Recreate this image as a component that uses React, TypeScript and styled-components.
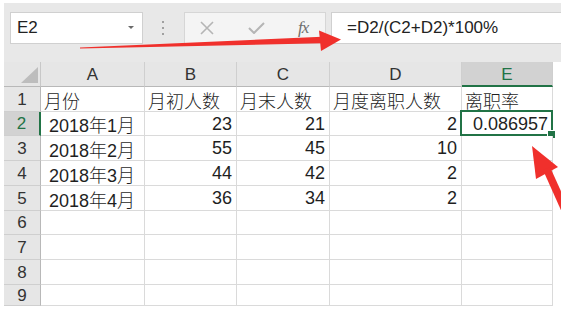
import React from "react";
import styled, { createGlobalStyle, css } from "styled-components";

const GlobalStyle = createGlobalStyle`
  html, body { margin: 0; padding: 0; background: #ffffff; }
  body { width: 561px; height: 313px; overflow: hidden; }
  * { box-sizing: border-box; }
`;

const GREEN = "#217346";
const FONT = `"Liberation Sans", "Noto Sans CJK SC", sans-serif`;

const Page = styled.div`
  position: relative;
  width: 561px;
  height: 313px;
  padding: 3px 0 0 4px;
  font-family: ${FONT};
`;

const Toolbar = styled.div`
  display: flex;
  align-items: center;
  height: 59px;
  padding: 0 0 10px 6px;
  background: #e8e8e8;
`;

const NameBox = styled.div`
  display: flex;
  align-items: center;
  justify-content: space-between;
  width: 133px;
  height: 32px;
  padding: 0 8px 0 6px;
  background: #ffffff;
  border: 1px solid #d0d0d0;
  font-size: 17px;
  color: #222;
`;

const DropArrow = styled.span`
  width: 0;
  height: 0;
  border-left: 3px solid transparent;
  border-right: 3px solid transparent;
  border-top: 3px solid #6a6a6a;
`;

const Grip = styled.div`
  display: flex;
  flex-direction: column;
  gap: 4px;
  margin: 0 20px 0 19px;
  span {
    width: 2px;
    height: 2px;
    background: #a0a0a0;
  }
`;

const FuncButtons = styled.div`
  display: flex;
  align-items: center;
  width: 142px;
  height: 32px;
  padding: 0 0 0 15px;
  background: #f4f4f4;
  border: 1px solid #d6d6d6;
`;

const FuncIcon = styled.span<{ $w: number }>`
  display: flex;
  align-items: center;
  width: ${(p) => p.$w}px;
`;

const Fx = styled.span`
  font-family: "Liberation Serif", serif;
  font-style: italic;
  font-size: 17px;
  color: #6e6e6e;
  letter-spacing: -1px;
`;

const FormulaInput = styled.div`
  flex: 1;
  height: 32px;
  margin-left: 5px;
  display: flex;
  align-items: center;
  padding-left: 15px;
  background: #ffffff;
  border: 1px solid #d0d0d0;
  border-right: none;
  font-size: 17px;
  color: #222;
`;

const Sheet = styled.div`
  display: grid;
  grid-template-columns: 37px 104px 92px 93px 132px 91px;
  grid-template-rows: 25px 25px 24px 25px 25px 25px 24px 25px 25px 21px;
  width: 549px;
`;

const Corner = styled.div`
  position: relative;
  background: #e6e6e6;
  border-right: 1px solid #c8c8c8;
  border-bottom: 1px solid #b8b8b8;
  &::after {
    content: "";
    position: absolute;
    right: 2px;
    bottom: 3px;
    width: 0;
    height: 0;
    border-left: 17px solid transparent;
    border-bottom: 16px solid #bdbdbd;
  }
`;

const ColHeader = styled.div<{ $sel?: boolean }>`
  display: flex;
  align-items: center;
  justify-content: center;
  padding-top: 2px;
  background: #e6e6e6;
  border-right: 1px solid #cfcfcf;
  border-bottom: 1px solid #b8b8b8;
  font-size: 17px;
  color: #333;
  ${(p) =>
    p.$sel &&
    css`
      background: #d2d2d2;
      color: ${GREEN};
      border-bottom: 2px solid ${GREEN};
    `}
`;

const RowHeader = styled.div<{ $sel?: boolean }>`
  display: flex;
  align-items: center;
  justify-content: center;
  padding-top: 1px;
  background: #e6e6e6;
  border-right: 1px solid #b8b8b8;
  border-bottom: 1px solid #cfcfcf;
  font-size: 17px;
  color: #333;
  ${(p) =>
    p.$sel &&
    css`
      background: #d2d2d2;
      color: ${GREEN};
      border-right: 2px solid ${GREEN};
    `}
`;

const Cell = styled.div<{ $align?: "left" | "right" | "center"; $sel?: boolean }>`
  position: relative;
  display: flex;
  align-items: center;
  justify-content: ${(p) =>
    p.$align === "right" ? "flex-end" : p.$align === "center" ? "center" : "flex-start"};
  padding: 1px 4px 0 3px;
  background: #ffffff;
  border-right: 1px solid #dadada;
  border-bottom: 1px solid #dadada;
  font-size: 18px;
  font-weight: 300;
  color: #1f1f1f;
  white-space: nowrap;
  ${(p) =>
    p.$sel &&
    css`
      &::before {
        content: "";
        position: absolute;
        left: -2px;
        top: -2px;
        right: -1px;
        bottom: -1px;
        border: 2px solid ${GREEN};
        pointer-events: none;
      }
      &::after {
        content: "";
        position: absolute;
        right: -4px;
        bottom: -4px;
        width: 7px;
        height: 7px;
        background: ${GREEN};
        border: 1px solid #ffffff;
      }
    `}
`;

const Overlay = styled.svg`
  position: absolute;
  left: 0;
  top: 0;
  pointer-events: none;
`;

type Align = "left" | "right" | "center";
type CellData = { v: string; a: Align };

const cols = ["A", "B", "C", "D", "E"];
const rows: CellData[][] = [
  [
    { v: "月份", a: "left" },
    { v: "月初人数", a: "left" },
    { v: "月末人数", a: "left" },
    { v: "月度离职人数", a: "left" },
    { v: "离职率", a: "left" },
  ],
  [
    { v: "2018年1月", a: "center" },
    { v: "23", a: "right" },
    { v: "21", a: "right" },
    { v: "2", a: "right" },
    { v: "0.086957", a: "right" },
  ],
  [
    { v: "2018年2月", a: "center" },
    { v: "55", a: "right" },
    { v: "45", a: "right" },
    { v: "10", a: "right" },
    { v: "", a: "right" },
  ],
  [
    { v: "2018年3月", a: "center" },
    { v: "44", a: "right" },
    { v: "42", a: "right" },
    { v: "2", a: "right" },
    { v: "", a: "right" },
  ],
  [
    { v: "2018年4月", a: "center" },
    { v: "36", a: "right" },
    { v: "34", a: "right" },
    { v: "2", a: "right" },
    { v: "", a: "right" },
  ],
];

const emptyRows = [6, 7, 8, 9];

export default function App() {
  return (
    <>
      <GlobalStyle />
      <Page>
        <Toolbar>
          <NameBox>
            <span>E2</span>
            <DropArrow />
          </NameBox>
          <Grip>
            <span />
            <span />
            <span />
          </Grip>
          <FuncButtons>
            <FuncIcon $w={48}>
              <svg width="14" height="14" viewBox="0 0 14 14">
                <path d="M1 1 L13 13 M13 1 L1 13" stroke="#b5b5b5" strokeWidth="1.6" fill="none" />
              </svg>
            </FuncIcon>
            <FuncIcon $w={50}>
              <svg width="17" height="12" viewBox="0 0 17 12">
                <path d="M1 6 L6 11 L16 1" stroke="#b5b5b5" strokeWidth="2" fill="none" />
              </svg>
            </FuncIcon>
            <FuncIcon $w={20}>
              <Fx>fx</Fx>
            </FuncIcon>
          </FuncButtons>
          <FormulaInput>=D2/(C2+D2)*100%</FormulaInput>
        </Toolbar>
        <Sheet>
          <Corner />
          {cols.map((c) => (
            <ColHeader key={c} $sel={c === "E"}>
              {c}
            </ColHeader>
          ))}
          {rows.map((r, i) => (
            <React.Fragment key={i}>
              <RowHeader $sel={i === 1}>{i + 1}</RowHeader>
              {r.map((cell, j) => (
                <Cell key={j} $align={cell.a} $sel={i === 1 && j === 4}>
                  {cell.v}
                </Cell>
              ))}
            </React.Fragment>
          ))}
          {emptyRows.map((n) => (
            <React.Fragment key={n}>
              <RowHeader>{n}</RowHeader>
              {cols.map((c) => (
                <Cell key={c} />
              ))}
            </React.Fragment>
          ))}
        </Sheet>
        <Overlay width="561" height="313" viewBox="0 0 561 313">
          <polygon points="80,47.6 322,36.8 322,43.2 80,48.6" fill="#f0302c" />
          <polygon points="319,30.5 341,39.5 321,51" fill="#f0302c" />
          <polygon points="532,146 558,167 536,179" fill="#f0302c" />
          <polygon points="543,170 550,167 575,222 568,226" fill="#f0302c" />
        </Overlay>
      </Page>
    </>
  );
}
